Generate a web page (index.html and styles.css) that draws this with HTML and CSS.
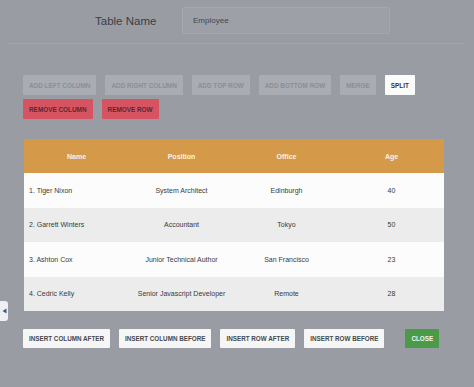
FILE: index.html
```html
<!DOCTYPE html>
<html>
<head>
<meta charset="utf-8">
<link rel="stylesheet" href="styles.css">
</head>
<body>
<div class="page">
  <div class="name-row">
    <label class="name-label">Table Name</label>
    <div class="name-input">Employee</div>
  </div>
  <div class="divider"></div>

  <div class="toolbar">
    <div class="btn-row">
      <button class="btn btn-disabled">ADD LEFT COLUMN</button>
      <button class="btn btn-disabled">ADD RIGHT COLUMN</button>
      <button class="btn btn-disabled">ADD TOP ROW</button>
      <button class="btn btn-disabled">ADD BOTTOM ROW</button>
      <button class="btn btn-disabled">MERGE</button>
      <button class="btn btn-white">SPLIT</button>
    </div>
    <div class="btn-row">
      <button class="btn btn-red">REMOVE COLUMN</button>
      <button class="btn btn-red">REMOVE ROW</button>
    </div>
  </div>

  <table class="data">
    <thead>
      <tr><th>Name</th><th>Position</th><th>Office</th><th>Age</th></tr>
    </thead>
    <tbody>
      <tr><td class="first">1. Tiger Nixon</td><td>System Architect</td><td>Edinburgh</td><td>40</td></tr>
      <tr class="alt"><td class="first">2. Garrett Winters</td><td>Accountant</td><td>Tokyo</td><td>50</td></tr>
      <tr><td class="first">3. Ashton Cox</td><td>Junior Technical Author</td><td>San Francisco</td><td>23</td></tr>
      <tr class="alt"><td class="first">4. Cedric Kelly</td><td>Senior Javascript Developer</td><td>Remote</td><td>28</td></tr>
    </tbody>
  </table>

  <div class="bottom-row">
    <button class="btn btn-light">INSERT COLUMN AFTER</button>
    <button class="btn btn-light">INSERT COLUMN BEFORE</button>
    <button class="btn btn-light">INSERT ROW AFTER</button>
    <button class="btn btn-light">INSERT ROW BEFORE</button>
    <button class="btn btn-green">CLOSE</button>
  </div>

  <div class="side-tab">
    <svg width="5" height="6" viewBox="0 0 5 6"><path d="M0.5 3 L4.5 0.5 L4.5 5.5 Z" fill="#3d5a80"/></svg>
  </div>
</div>
</body>
</html>
```

FILE: styles.css
```css
html, body {
  margin: 0;
  padding: 0;
}
body {
  background: #999ca3;
  font-family: "Liberation Sans", Arial, sans-serif;
  width: 474px;
  height: 387px;
  overflow: hidden;
}
.page {
  position: relative;
  padding-top: 7px;
  height: 380px;
}
.name-row {
  display: flex;
  align-items: center;
  padding-left: 95px;
  height: 27px;
}
.name-label {
  width: 87px;
  font-size: 11.5px;
  color: #3b3e44;
}
.name-input {
  box-sizing: border-box;
  width: 208px;
  height: 27px;
  background: #9da0a7;
  border: 1px solid #a4a7ad;
  border-radius: 2px;
  font-size: 8px;
  color: #44474c;
  display: flex;
  align-items: center;
  padding-left: 10px;
}
.divider {
  height: 1px;
  margin: 9px 11px 0 7px;
  background: #a2a5ab;
}
.toolbar {
  margin-top: 31px;
  padding-left: 23px;
  display: flex;
  flex-direction: column;
  gap: 4px;
}
.btn-row {
  display: flex;
  gap: 9px;
}
.btn {
  font-family: "Liberation Sans", Arial, sans-serif;
  font-weight: bold;
  font-size: 6.4px;
  height: 20px;
  padding: 0 6px;
  border: none;
  border-radius: 1px;
  margin: 0;
  white-space: nowrap;
}
.btn-disabled {
  background: #a9acb2;
  color: #8b8f95;
}
.btn-white {
  background: #fbfbfb;
  color: #33363b;
}
.btn-red {
  background: #d65462;
  color: #5a2830;
}
.btn-light {
  background: #f6f6f6;
  color: #45484d;
}
.btn-green {
  background: #4b9a48;
  color: #f2f7f1;
  margin-left: 12px;
}
.data {
  margin: 20px 0 0 24px;
  width: 420px;
  border-collapse: collapse;
  table-layout: fixed;
  font-size: 7px;
  color: #3a3a3a;
}
.data th {
  background: #d49a4a;
  color: #fbf3e6;
  font-weight: bold;
  height: 34px;
  padding: 0;
  text-align: center;
}
.data td {
  height: 34.5px;
  padding: 0;
  text-align: center;
  background: #fcfcfc;
}
.data tr.alt td {
  background: #ececec;
}
.data td.first {
  text-align: left;
  padding-left: 5px;
}
.bottom-row {
  display: flex;
  gap: 9px;
  margin-top: 18px;
  padding-left: 23px;
}
.bottom-row .btn {
  height: 19px;
  font-size: 6.3px;
}
.side-tab {
  position: absolute;
  left: 0;
  top: 301px;
  width: 8px;
  height: 20px;
  background: #eef0f3;
  border-radius: 0 3px 3px 0;
  display: flex;
  align-items: center;
  justify-content: center;
}
```
